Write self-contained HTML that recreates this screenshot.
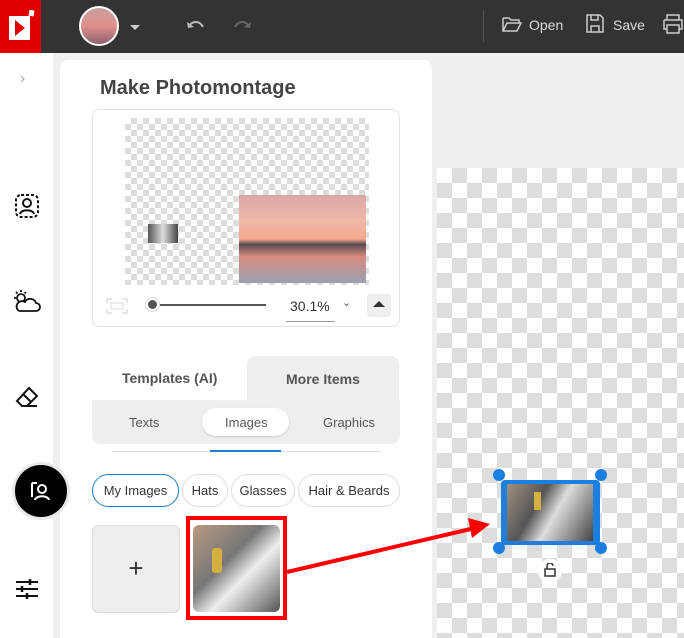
<!DOCTYPE html>
<html><head><meta charset="utf-8"><style>
*{box-sizing:border-box;margin:0;padding:0}
html,body{width:684px;height:638px;overflow:hidden}
body{background:#efefef;font-family:"Liberation Sans",sans-serif;position:relative}
.a{position:absolute}
.top{left:0;top:0;width:684px;height:53px;background:#333}
.chk{background-color:#fff;background-image:linear-gradient(45deg,#ddd 25%,transparent 25%,transparent 75%,#ddd 75%),linear-gradient(45deg,#ddd 25%,transparent 25%,transparent 75%,#ddd 75%)}
.pill{position:absolute;top:474px;height:33px;border:1px solid #ddd;border-radius:17px;font-size:13px;color:#333;line-height:31px;text-align:center;background:#fff}
</style></head><body>
<div class="a top"></div>
<div class="a" style="left:0;top:0;width:41px;height:53px;background:#e00000"></div>
<svg class="a" style="left:9px;top:8px" width="26" height="34"><rect x="0" y="8" width="21" height="24" fill="#fff"/><rect x="20" y="2" width="5" height="6" fill="#fff" transform="rotate(10 22 5)"/><path d="M6 12 L16 20 L6 28Z" fill="#e00000"/></svg>
<div class="a" style="left:79px;top:6px;width:40px;height:40px;border-radius:50%;border:2px solid #fff;background:linear-gradient(#c8a0a0,#e0908a 50%,#906070)"></div>
<div class="a" style="left:130px;top:25px;border:5px solid transparent;border-top:5px solid #ccc"></div>
<svg class="a" style="left:185px;top:17px" width="70" height="18"><path d="M4 9 C8 3 15 4 18 10" stroke="#bbb" stroke-width="2" fill="none"/><path d="M2 5 L3 11 L9 10Z" fill="#bbb"/><path d="M64 9 C60 3 53 4 50 10" stroke="#666" stroke-width="2" fill="none"/><path d="M66 5 L65 11 L59 10Z" fill="#666"/></svg>
<div class="a" style="left:483px;top:10px;width:1px;height:32px;background:#555"></div>
<svg class="a" style="left:502px;top:15px" width="20" height="18"><path d="M1 3h6l2 2h8v3M1 3v13h14l4-8H5L1 16" stroke="#ccc" stroke-width="1.5" fill="none"/></svg>
<div class="a" style="left:529px;top:17px;color:#ddd;font-size:14px">Open</div>
<svg class="a" style="left:586px;top:14px" width="18" height="19"><path d="M1 1h13l3 3v14H1Z M5 1v5h7V1 M5 18v-6h8v6" stroke="#ccc" stroke-width="1.5" fill="none"/></svg>
<div class="a" style="left:613px;top:17px;color:#ddd;font-size:14px">Save</div>
<svg class="a" style="left:662px;top:14px" width="22" height="20"><path d="M5 6V1h12v5 M2 6h18v9h-3 M5 15H2V6 M5 11h12v8H5Z" stroke="#ccc" stroke-width="1.5" fill="none"/></svg>
<!-- sidebar -->
<div class="a" style="left:0;top:53px;width:53px;height:585px;background:#fff"></div>
<div class="a" style="left:20px;top:70px;color:#aaa;font-size:16px">›</div>
<svg class="a" style="left:15px;top:194px" width="24" height="24"><rect x="1" y="1" width="22" height="22" rx="5" stroke="#111" stroke-width="2" stroke-dasharray="3 2" fill="none"/><circle cx="12" cy="9" r="4" stroke="#111" stroke-width="2" fill="none"/><path d="M5 20c1-5 13-5 14 0" stroke="#111" stroke-width="2" fill="none"/></svg>
<svg class="a" style="left:13px;top:289px" width="28" height="24"><circle cx="8" cy="9" r="4" stroke="#111" stroke-width="1.8" fill="none"/><path d="M8 1v2M1 9h2M3 3l1.5 1.5M13 3l-1.5 1.5M6 22h17a4 4 0 0 0 0-8 6 6 0 0 0-11-1 4 4 0 0 0-6 9" stroke="#111" stroke-width="1.8" fill="#fff"/></svg>
<svg class="a" style="left:15px;top:386px" width="24" height="24"><path d="M14 2l8 8-10 10H7L2 15Z M8 8l8 8 M7 20h15" stroke="#111" stroke-width="2" fill="none"/></svg>
<svg class="a" style="left:15px;top:578px" width="24" height="22"><path d="M1 4h22M1 11h22M1 18h22" stroke="#111" stroke-width="2"/><path d="M15 1v6M7 8v6M12 15v6" stroke="#111" stroke-width="2.5"/></svg>
<!-- panel -->
<div class="a" style="left:60px;top:60px;width:372px;height:590px;background:#fff;border-radius:8px"></div>
<div class="a" style="left:12px;top:462px;width:58px;height:58px;border-radius:50%;background:#000;border:3px solid #e8e8e8"></div>
<svg class="a" style="left:28px;top:479px" width="26" height="24"><circle cx="14" cy="10" r="4" stroke="#fff" stroke-width="2" fill="none"/><path d="M7 21c1-5 13-5 14 0 M4 4h5M4 4v14" stroke="#fff" stroke-width="2" fill="none"/></svg>
<div class="a" style="left:100px;top:77px;font-size:20px;font-weight:bold;color:#444">Make Photomontage</div>
<div class="a" style="left:92px;top:109px;width:308px;height:218px;border:1px solid #e2e2e2;border-radius:8px;background:#fff"></div>
<div class="a chk" style="left:125px;top:118px;width:244px;height:167px;background-size:12px 12px;background-position:0 0,6px 6px"></div>
<div class="a" style="left:239px;top:195px;width:127px;height:88px;background:linear-gradient(#d9a8a8 0%,#f0b8a8 30%,#f4a890 50%,#5a4a52 56%,#d88a80 70%,#9aa0b0 100%)"></div>
<div class="a" style="left:148px;top:224px;width:30px;height:19px;background:linear-gradient(90deg,#555,#ddd 50%,#444)"></div>
<svg class="a" style="left:106px;top:298px" width="22" height="16"><path d="M1 5V1h5M16 1h5v4M21 11v4h-5M6 15H1v-4" stroke="#ddd" stroke-width="1.5" fill="none"/><rect x="5" y="5" width="12" height="6" stroke="#ddd" fill="none"/></svg>
<div class="a" style="left:152px;top:304px;width:114px;height:2px;background:#555"></div>
<div class="a" style="left:146px;top:298px;width:13px;height:13px;border-radius:50%;background:#555;border:2px solid #fff;box-shadow:0 0 0 1px #ddd"></div>
<div class="a" style="left:290px;top:298px;font-size:14px;color:#333">30.1%</div>
<div class="a" style="left:286px;top:321px;width:49px;height:1px;background:#999"></div>
<div class="a" style="left:342px;top:296px;font-size:11px;color:#555">⌄</div>
<div class="a" style="left:367px;top:294px;width:24px;height:23px;background:#eee;border-radius:3px"></div>
<div class="a" style="left:373px;top:301px;border:6px solid transparent;border-bottom:6px solid #333;border-top:0"></div>
<!-- tabs -->
<div class="a" style="left:247px;top:356px;width:152px;height:50px;background:#eee;border-radius:8px 8px 0 0"></div>
<div class="a" style="left:122px;top:370px;font-size:14px;font-weight:bold;color:#555">Templates (AI)</div>
<div class="a" style="left:286px;top:371px;font-size:14px;font-weight:bold;color:#555">More Items</div>
<div class="a" style="left:92px;top:400px;width:308px;height:44px;background:#eee;border-radius:0 0 8px 8px"></div>
<div class="a" style="left:202px;top:408px;width:87px;height:28px;background:#fff;border-radius:14px;box-shadow:0 1px 2px rgba(0,0,0,.15)"></div>
<div class="a" style="left:129px;top:415px;font-size:13px;color:#555">Texts</div>
<div class="a" style="left:225px;top:415px;font-size:13px;color:#555">Images</div>
<div class="a" style="left:323px;top:415px;font-size:13px;color:#555">Graphics</div>
<div class="a" style="left:112px;top:451px;width:268px;height:1px;background:#ddd"></div>
<div class="a" style="left:210px;top:450px;width:71px;height:2px;background:#1a7fd4"></div>
<div class="pill" style="left:92px;width:87px;border-color:#1a7fd4">My Images</div>
<div class="pill" style="left:182px;width:46px">Hats</div>
<div class="pill" style="left:231px;width:64px">Glasses</div>
<div class="pill" style="left:298px;width:102px">Hair &amp; Beards</div>
<div class="a" style="left:92px;top:525px;width:88px;height:88px;background:#eee;border:1px solid #ddd;border-radius:6px;text-align:center;line-height:84px;font-size:26px;color:#333">+</div>
<div class="a" style="left:186px;top:516px;width:101px;height:104px;border:4px solid #f00"></div>
<div class="a" style="left:193px;top:525px;width:87px;height:87px;border-radius:6px;background:linear-gradient(135deg,#b89a80,#777 40%,#eee 60%,#555)"></div>
<div class="a" style="left:212px;top:548px;width:10px;height:25px;background:#d4b040;border-radius:3px"></div>
<!-- canvas -->
<div class="a chk" style="left:437px;top:168px;width:247px;height:470px;background-size:30px 30px;background-position:0 0,15px 15px"></div>
<div class="a" style="left:501px;top:480px;width:99px;height:65px;background:#1a7fe0;border-radius:4px"></div>
<div class="a" style="left:507px;top:484px;width:86px;height:57px;background:linear-gradient(120deg,#a09080,#555 35%,#ddd 55%,#444)"></div>
<div class="a" style="left:534px;top:492px;width:7px;height:18px;background:#d4b040"></div>
<div class="a" style="left:493px;top:469px;width:12px;height:12px;border-radius:50%;background:#1a7fe0"></div>
<div class="a" style="left:595px;top:469px;width:12px;height:12px;border-radius:50%;background:#1a7fe0"></div>
<div class="a" style="left:493px;top:542px;width:12px;height:12px;border-radius:50%;background:#1a7fe0"></div>
<div class="a" style="left:595px;top:542px;width:12px;height:12px;border-radius:50%;background:#1a7fe0"></div>
<div class="a" style="left:538px;top:559px;width:24px;height:24px;border-radius:50%;background:#fff"></div>
<svg class="a" style="left:544px;top:563px" width="12" height="14"><path d="M3 6V3a3 3 0 0 1 6 0" stroke="#333" stroke-width="1.5" fill="none"/><rect x="1" y="6" width="10" height="7" stroke="#333" stroke-width="1.5" fill="none"/></svg>
<svg class="a" style="left:0;top:0" width="684" height="638"><path d="M287 572 L475 528" stroke="#f00" stroke-width="4"/><path d="M490 524 L468 518 L472 538Z" fill="#f00"/></svg>
</body></html>
